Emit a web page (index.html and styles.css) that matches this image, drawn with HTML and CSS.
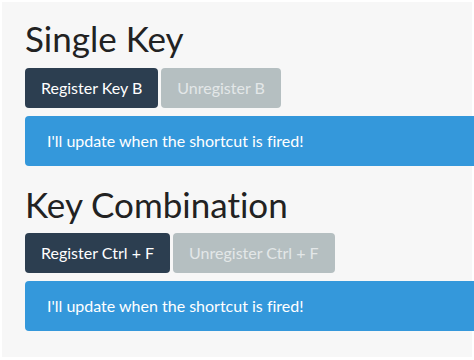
FILE: index.html
```html
<!DOCTYPE html>
<html lang="en">
<head>
  <meta charset="UTF-8" />
  <title>Keyboard Shortcuts</title>
  <link rel="stylesheet" href="styles.css">
</head>
<body>

<div class="page">

  <!-- Single key -->
  <section class="demo">
    <h1>Single Key</h1>
    <div class="btn-row">
      <button class="btn btn-primary">Register Key B</button>
      <button class="btn btn-default" disabled>Unregister B</button>
    </div>
    <div class="alert">I'll update when the shortcut is fired!</div>
  </section>

  <!-- Key combination -->
  <section class="demo">
    <h1>Key Combination</h1>
    <div class="btn-row">
      <button class="btn btn-primary">Register Ctrl + F</button>
      <button class="btn btn-default" disabled>Unregister Ctrl + F</button>
    </div>
    <div class="alert">I'll update when the shortcut is fired!</div>
  </section>

</div>

</body>
</html>
```

FILE: styles.css
```css
html, body {
  margin: 0;
  padding: 0;
  background-color: white;
  font-family: Lato, "Open Sans", sans-serif;
  font-variant-ligatures: none;
  overflow: hidden;
}
.page {
  margin: 2px 2px 0 2px;
  height: 355px;
  padding: 17px 0 0 23px;
  box-sizing: border-box;
  background-color: #f7f7f7;
}
.demo {
  margin-bottom: 19px;
}
h1 {
  margin: 0 0 10px;
  font-size: 35px;
  font-weight: 400;
  line-height: 1.1;
  color: #222;
}
.btn-row {
  display: flex;
  gap: 3px;
  margin-bottom: 8px;
}
.btn {
  font-family: inherit;
  font-size: 16px;
  line-height: 22px;
  padding: 8px 15px;
  border: 1px solid transparent;
  border-radius: 4px;
  color: white;
}
.btn-primary {
  background-color: #2c3e50;
}
.btn-default {
  background-color: #b5bfc1;
  color: #e3e7e8;
}
.alert {
  margin-right: -4px;
  padding: 14px 22px;
  font-size: 16px;
  line-height: 22px;
  color: white;
  background-color: #3498db;
  border-radius: 4px 0 0 4px;
}
```
